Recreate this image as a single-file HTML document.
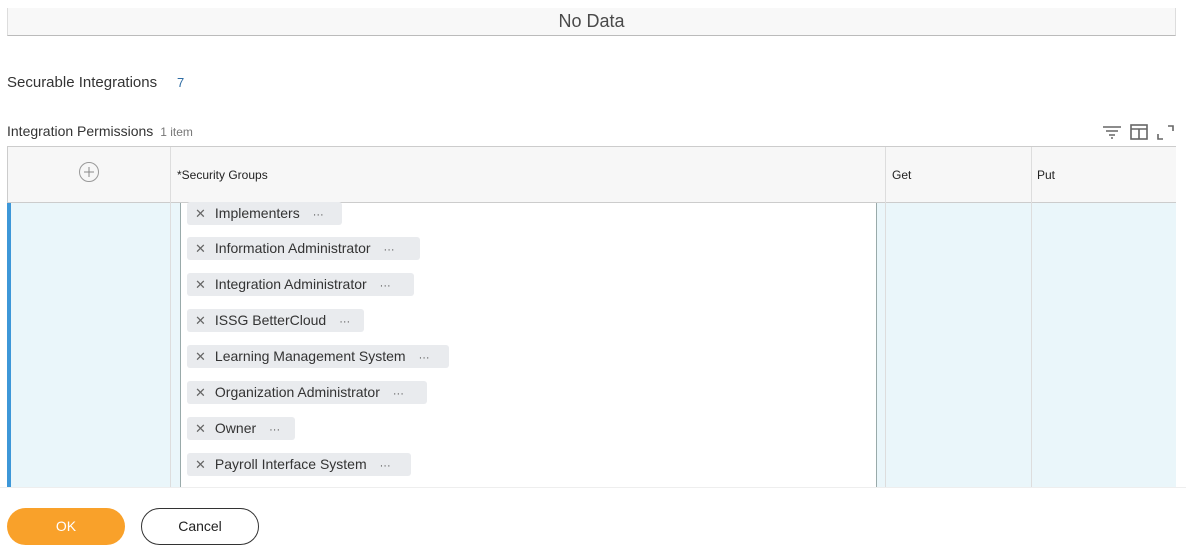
<!DOCTYPE html><html><head><style>
*{margin:0;padding:0;box-sizing:border-box}
body{width:1186px;height:552px;background:#fff;font-family:"Liberation Sans",sans-serif;position:relative;overflow:hidden;color:#333}
.abs{position:absolute}
.chip{position:absolute;left:187px;height:23px;background:#e9ebee;border-radius:3px;font-size:14px;color:#333;line-height:23px;padding-left:8px;white-space:nowrap}
.chip .x{color:#666;font-size:13px;margin-right:9px}
.chip .d{display:inline-block;margin-left:10px;padding:0 3px;font-size:11px;line-height:14px;color:#555;letter-spacing:0px}
</style></head><body>
<div class="abs" style="left:7px;top:8px;width:1169px;height:28px;background:#f8f8f8;border-bottom:1px solid #bbb;border-left:1px solid #ddd;border-right:1px solid #ddd;text-align:center;font-size:18px;line-height:27px;color:#4a4a4a">No Data</div>
<div class="abs" style="left:7px;top:74px;font-size:15px;color:#333">Securable Integrations</div>
<div class="abs" style="left:177px;top:75px;font-size:13px;color:#2f6da4">7</div>
<div class="abs" style="left:7px;top:123px;font-size:14px;color:#333">Integration Permissions <span style="font-size:12px;color:#777;margin-left:3px">1 item</span></div>
<svg class="abs" style="left:1100px;top:122px" width="76" height="20" viewBox="0 0 76 20">
<g stroke="#666" stroke-width="1.6" fill="none">
<path d="M3 5h18M6 9h12M9 13h6M11 16h2"/>
<rect x="31" y="3" width="16" height="14"/><path d="M31 7h16M39 7v10"/>
<path d="M58 12v5h5M68 4h5v5"/></g></svg>
<div class="abs" style="left:7px;top:146px;width:1169px;height:342px;border:1px solid #ccc;border-bottom:none"></div>
<div class="abs" style="left:8px;top:147px;width:1168px;height:56px;background:#f7f7f7;border-bottom:1px solid #ccc"></div>
<div class="abs" style="left:8px;top:203px;width:1168px;height:284px;background:#eaf6fa"></div>
<div class="abs" style="left:7px;top:203px;width:4px;height:284px;background:#3d97d8"></div>
<div class="abs" style="left:170px;top:147px;width:1px;height:340px;background:#ddd"></div>
<div class="abs" style="left:885px;top:147px;width:1px;height:340px;background:#ddd"></div>
<div class="abs" style="left:1031px;top:147px;width:1px;height:340px;background:#ddd"></div>
<div class="abs" style="left:180px;top:203px;width:697px;height:284px;background:#fff;border-left:1px solid #9aa;border-right:1px solid #9aa"></div>
<svg class="abs" style="left:78px;top:161px" width="22" height="22"><circle cx="11" cy="11" r="9.5" fill="none" stroke="#999" stroke-width="1"/><path d="M11 6v10M6 11h10" stroke="#888" stroke-width="1"/></svg>
<div class="abs" style="left:177px;top:168px;font-size:12px;color:#222">*Security Groups</div>
<div class="abs" style="left:892px;top:168px;font-size:12px;color:#222">Get</div>
<div class="abs" style="left:1037px;top:168px;font-size:12px;color:#222">Put</div>
<div class="chip" style="top:202px;width:155px"><span class="x">✕</span>Implementers<span class="d">···</span></div>
<div class="chip" style="top:237px;width:233px"><span class="x">✕</span>Information Administrator<span class="d">···</span></div>
<div class="chip" style="top:273px;width:227px"><span class="x">✕</span>Integration Administrator<span class="d">···</span></div>
<div class="chip" style="top:309px;width:177px"><span class="x">✕</span>ISSG BetterCloud<span class="d">···</span></div>
<div class="chip" style="top:345px;width:262px"><span class="x">✕</span>Learning Management System<span class="d">···</span></div>
<div class="chip" style="top:381px;width:240px"><span class="x">✕</span>Organization Administrator<span class="d">···</span></div>
<div class="chip" style="top:417px;width:108px"><span class="x">✕</span>Owner<span class="d">···</span></div>
<div class="chip" style="top:453px;width:224px"><span class="x">✕</span>Payroll Interface System<span class="d">···</span></div>
<div class="abs" style="left:0;top:487px;width:1186px;height:65px;background:#fff;border-top:1px solid #eee"></div>
<div class="abs" style="left:7px;top:508px;width:118px;height:37px;border-radius:19px;background:#f9a12a;color:#fff;font-size:14px;text-align:center;line-height:37px">OK</div>
<div class="abs" style="left:141px;top:508px;width:118px;height:37px;border-radius:19px;border:1px solid #333;color:#222;font-size:14px;text-align:center;line-height:35px">Cancel</div>
</body></html>
